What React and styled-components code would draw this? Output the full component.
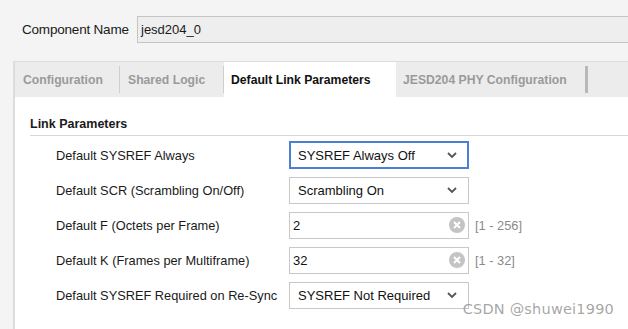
import React from 'react'
import styled, { createGlobalStyle } from 'styled-components';

const GlobalStyle = createGlobalStyle`
  html, body {
    margin: 0;
    padding: 0;
    background: #f4f4f4;
    font-family: "Liberation Sans", Arial, sans-serif;
    font-size: 13px;
    color: #1a1a1a;
    overflow: hidden;
  }
`

const Page = styled.div`
  width: 628px;
  height: 329px;
  position: relative;
  overflow: hidden;
`

const NameRow = styled.div`
  display: flex;
  align-items: center;
  height: 27px;
  margin-top: 16px;
  padding-left: 22px;
`

const NameLabel = styled.span`
  width: 115px;
  font-size: 13.5px;
  letter-spacing: -0.2px;
`

const NameInput = styled.div`
  flex: 1;
  height: 25px;
  margin-right: -10px;
  border: 1px solid #c4c4c4;
  background: #eeeeee;
  display: flex;
  align-items: center;
  padding-left: 3px;
  font-size: 13px;
`

const TabBox = styled.div`
  margin: 18px 0 0 13px;
  border-left: 2px solid #dcdcdc;
  border-top: 1px solid #dcdcdc;
  background: #fff;
  height: 280px;
`

const TabBar = styled.div`
  display: flex;
  height: 35px;
  background: #ececec;
  padding-left: 1px;
`

const Tab = styled.div`
  display: flex;
  align-items: center;
  box-sizing: border-box;
  width: ${p => p.$w}px;
  padding: 0 ${p => p.$pad || 7}px;
  font-weight: bold;
  font-size: 12.2px;
  color: ${p => (p.$active ? '#111' : '#9a9a9a')};
  background: ${p => (p.$active ? '#fff' : 'transparent')};
  position: relative;
  &::after {
    content: '';
    display: ${p => (p.$sep ? 'block' : 'none')};
    position: absolute;
    right: 0;
    top: 4px;
    bottom: 4px;
    width: ${p => (p.$sep === 'thick' ? 3 : 1)}px;
    background: ${p => (p.$sep === 'thick' ? '#b8b8b8' : '#cfcfcf')};
  }
`

const Panel = styled.div`
  padding: 20px 0 0 15px;
`

const SectionTitle = styled.div`
  font-weight: bold;
  font-size: 12.5px;
  padding-bottom: 4px;
  border-bottom: 1px solid #d8d8d8;
`

const Rows = styled.div`
  display: flex;
  flex-direction: column;
  gap: 7px;
  padding-top: 5px;
`

const Row = styled.div`
  display: flex;
  align-items: center;
  height: 28px;
`

const Label = styled.span`
  width: 233px;
  padding-left: 26px;
  font-size: 12.8px;
`

const Field = styled.div`
  width: 180px;
  height: ${p => (p.$focus ? 28 : 27)}px;
  box-sizing: border-box;
  border: ${p => (p.$focus ? '2px solid #4b7fd1' : '1px solid #c8c8c8')};
  background: #fff;
  display: flex;
  align-items: center;
  justify-content: space-between;
  padding: 0 ${p => (p.$focus ? 9 : 10)}px 0 ${p => (p.$focus ? 7 : 8)}px;
  font-size: 13px;
  color: #111;
`

const TextField = styled(Field)`
  padding-left: 3px;
  padding-right: 3px;
`

const Range = styled.span`
  margin-left: 6px;
  color: #8a8a8a;
  font-size: 12.8px;
`

const Watermark = styled.div`
  position: absolute;
  right: 14px;
  bottom: 12px;
  font-family: "DejaVu Sans", sans-serif;
  font-size: 14.5px;
  color: rgba(150, 150, 150, 0.85);
  letter-spacing: 0.2px;
`

const Chevron = () => (
  <svg width="12" height="8" viewBox="0 0 12 8">
    <path d="M2 2 L6 6 L10 2" fill="none" stroke="#555" strokeWidth="1.8" />
  </svg>
)

const ClearIcon = () => (
  <svg width="16" height="16" viewBox="0 0 16 16">
    <circle cx="8" cy="8" r="8" fill="#c4c4c4" />
    <path d="M5 5 L11 11 M11 5 L5 11" stroke="#fff" strokeWidth="2" />
  </svg>
)

const tabs = [
  { name: 'Configuration', w: 104, sep: 'thin' },
  { name: 'Shared Logic', w: 104, sep: 'thin', pad: 8 },
  { name: 'Default Link Parameters', w: 172, active: true },
  { name: 'JESD204 PHY Configuration', w: 192, sep: 'thick' },
]

const rows = [
  { label: 'Default SYSREF Always', kind: 'select', value: 'SYSREF Always Off', focus: true },
  { label: 'Default SCR (Scrambling On/Off)', kind: 'select', value: 'Scrambling On' },
  { label: 'Default F (Octets per Frame)', kind: 'text', value: '2', range: '[1 - 256]' },
  { label: 'Default K (Frames per Multiframe)', kind: 'text', value: '32', range: '[1 - 32]' },
  { label: 'Default SYSREF Required on Re-Sync', kind: 'select', value: 'SYSREF Not Required' },
]

const App = () => {
  return (
    <Page>
      <GlobalStyle />
      <NameRow>
        <NameLabel>Component Name</NameLabel>
        <NameInput>jesd204_0</NameInput>
      </NameRow>
      <TabBox>
        <TabBar>
          {tabs.map(t => (
            <Tab key={t.name} $w={t.w} $sep={t.sep} $pad={t.pad} $active={t.active}>
              {t.name}
            </Tab>
          ))}
        </TabBar>
        <Panel>
          <SectionTitle>Link Parameters</SectionTitle>
          <Rows>
            {rows.map(r => (
              <Row key={r.label}>
                <Label>{r.label}</Label>
                {r.kind === 'select' ? (
                  <Field $focus={r.focus}>
                    <span>{r.value}</span>
                    <Chevron />
                  </Field>
                ) : (
                  <>
                    <TextField>
                      <span>{r.value}</span>
                      <ClearIcon />
                    </TextField>
                    <Range>{r.range}</Range>
                  </>
                )}
              </Row>
            ))}
          </Rows>
        </Panel>
      </TabBox>
      <Watermark>CSDN @shuwei1990</Watermark>
    </Page>
  )
}

export default App;
